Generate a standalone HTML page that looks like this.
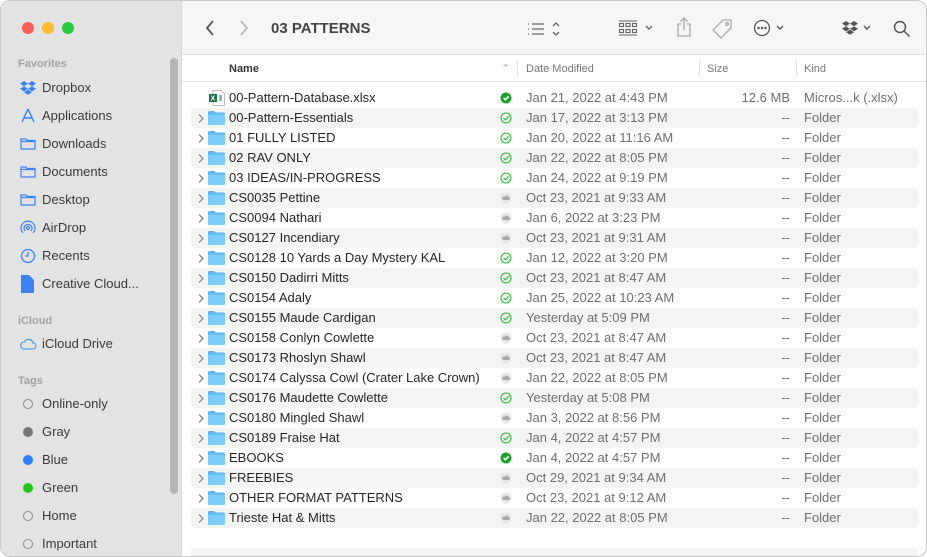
<!DOCTYPE html>
<html><head><meta charset="utf-8"><style>
*{margin:0;padding:0;box-sizing:border-box}
body{width:927px;height:557px;background:#fff;font-family:"Liberation Sans",Arial,sans-serif;overflow:hidden;position:relative}
.win{position:absolute;left:0;top:0;width:927px;height:557px;border:1px solid #c8c8c8;border-radius:10px;overflow:hidden;background:#fff}
.side{position:absolute;left:0;top:0;width:181px;height:557px;background:#e3e3e3;border-right:1px solid #d6d6d6}
.dot{position:absolute;top:21px;width:12px;height:12px;border-radius:50%}
.sh{position:absolute;left:17px;font-size:11px;font-weight:bold;color:#a3a3a3}
.si{position:absolute;left:41px;font-size:13px;color:#3a3a3a;line-height:16px}
.ic{position:absolute;left:19px}
.scroll{position:absolute;left:169px;top:57px;width:8px;height:436px;border-radius:4px;background:#b5b5b5}
.tb{position:absolute;left:181px;top:0;right:0;height:54px;background:#f6f6f6;border-bottom:1px solid #dedede}
.title{position:absolute;left:89px;top:19px;font-size:15px;font-weight:bold;color:#444}
.hdr{position:absolute;left:181px;top:55px;right:0;height:26px;border-bottom:1px solid #e2e2e2;font-size:11px;color:#777}
.hdr span{position:absolute;top:7px}
.hdr i{position:absolute;top:4px;width:1px;height:18px;background:#e2e2e2}
.row{position:absolute;left:190px;width:727px;height:20px;font-size:13px;line-height:20px;color:#262626;border-radius:4px}
.row.g{background:#f4f4f4}
.row .n{position:absolute;left:38px}
.row .d{position:absolute;left:335px;color:#6e6e6e}
.row .s{position:absolute;right:128px;color:#6e6e6e}
.row .k{position:absolute;left:613px;color:#6e6e6e}
.row svg.ch{position:absolute;left:7px;top:6px}
.row svg.f{position:absolute;left:17px;top:3px}
.row svg.st{position:absolute;left:309px;top:4px}
</style></head><body><div class="win">
<div class="side">
<div class="dot" style="left:21px;background:#fe5f57"></div>
<div class="dot" style="left:41px;background:#febc2e"></div>
<div class="dot" style="left:61px;background:#28c840"></div>
<div class="sh" style="top:57px">Favorites</div>
<svg class="ic" style="top:80px" width="16" height="14" viewBox="0 0 16 14"><path d="M4 0L0 2.6 4 5.2 8 2.6zM12 0L8 2.6 12 5.2 16 2.6zM0 7.8L4 10.4 8 7.8 4 5.2zM12 5.2L8 7.8 12 10.4 16 7.8zM4 11.2L8 13.8 12 11.2 8 8.6z" fill="#3b82f6"/></svg>
<div class="si" style="top:79px">Dropbox</div>
<svg class="ic" style="top:107px" width="16" height="16" viewBox="0 0 16 16" fill="none" stroke="#3b82f6" stroke-width="1.4"><path d="M8 1L2 14M8 1l6 13M4 10h8"/></svg>
<div class="si" style="top:107px">Applications</div>
<svg class="ic" style="top:136px" width="16" height="13" viewBox="0 0 16 13" fill="none" stroke="#3b82f6" stroke-width="1.2"><path d="M1 2h5l1 1.5h8V12H1zM1 4.5h14"/></svg>
<div class="si" style="top:135px">Downloads</div>
<svg class="ic" style="top:164px" width="16" height="13" viewBox="0 0 16 13" fill="none" stroke="#3b82f6" stroke-width="1.2"><path d="M1 2h5l1 1.5h8V12H1zM1 4.5h14"/></svg>
<div class="si" style="top:163px">Documents</div>
<svg class="ic" style="top:192px" width="16" height="13" viewBox="0 0 16 13" fill="none" stroke="#3b82f6" stroke-width="1.2"><path d="M1 2h5l1 1.5h8V12H1zM1 4.5h14"/></svg>
<div class="si" style="top:191px">Desktop</div>
<svg class="ic" style="top:219px" width="16" height="16" viewBox="0 0 16 16" fill="none" stroke="#3b82f6" stroke-width="1.2"><circle cx="8" cy="8" r="1.5"/><path d="M5 11a4 4 0 1 1 6 0M3 13a7 7 0 1 1 10 0"/></svg>
<div class="si" style="top:219px">AirDrop</div>
<svg class="ic" style="top:247px" width="16" height="16" viewBox="0 0 16 16" fill="none" stroke="#3b82f6" stroke-width="1.3"><circle cx="8" cy="8" r="6.5"/><path d="M8 4v4h-3"/></svg>
<div class="si" style="top:247px">Recents</div>
<svg class="ic" style="top:274px" width="14" height="18" viewBox="0 0 14 18"><path d="M1 0h8l5 5v13H1z" fill="#3b82f6"/></svg>
<div class="si" style="top:275px">Creative Cloud...</div>
<div class="sh" style="top:314px">iCloud</div>
<svg class="ic" style="top:337px" width="17" height="12" viewBox="0 0 17 12" fill="none" stroke="#3b9ae6" stroke-width="1.1"><path d="M4 11h9a3 3 0 0 0 0-6 4.5 4.5 0 0 0-8.5-1A3.5 3.5 0 0 0 4 11z"/></svg>
<div class="si" style="top:335px">iCloud Drive</div>
<div class="sh" style="top:374px">Tags</div>
<div style="position:absolute;left:22px;top:398px;width:10px;height:10px;border-radius:50%;border:1px solid #888"></div><div class="si" style="top:395px">Online-only</div>
<div style="position:absolute;left:22px;top:426px;width:10px;height:10px;border-radius:50%;background:#78777c"></div><div class="si" style="top:423px">Gray</div>
<div style="position:absolute;left:22px;top:454px;width:10px;height:10px;border-radius:50%;background:#2e7cf6"></div><div class="si" style="top:451px">Blue</div>
<div style="position:absolute;left:22px;top:482px;width:10px;height:10px;border-radius:50%;background:#27c21c"></div><div class="si" style="top:479px">Green</div>
<div style="position:absolute;left:22px;top:510px;width:10px;height:10px;border-radius:50%;border:1px solid #888"></div><div class="si" style="top:507px">Home</div>
<div style="position:absolute;left:22px;top:538px;width:10px;height:10px;border-radius:50%;border:1px solid #888"></div><div class="si" style="top:535px">Important</div>
<div class="scroll"></div>
</div>
<div class="tb">
<svg style="position:absolute;left:23px;top:19px" width="10" height="16" viewBox="0 0 10 16" fill="none" stroke="#555" stroke-width="1.8"><path d="M8 1L2 8l6 7"/></svg>
<svg style="position:absolute;left:57px;top:19px" width="10" height="16" viewBox="0 0 10 16" fill="none" stroke="#bbb" stroke-width="1.8"><path d="M2 1l6 7-6 7"/></svg>
<div class="title">03 PATTERNS</div>
<svg style="position:absolute;left:345px;top:19px" width="36" height="18" viewBox="0 0 36 18" fill="none" stroke="#666" stroke-width="1.3"><path d="M1 4h1M1 9h1M1 14h1M5 4h12M5 9h12M5 14h12M26 6l3-3 3 3M26 12l3 3 3-3"/></svg>
<svg style="position:absolute;left:436px;top:18px" width="38" height="18" viewBox="0 0 38 18" fill="none" stroke="#666" stroke-width="1.1"><path d="M1 2h18M1 16h18"/><rect x="1.5" y="4.5" width="4" height="3"/><rect x="8" y="4.5" width="4" height="3"/><rect x="14.5" y="4.5" width="4" height="3"/><rect x="1.5" y="10.5" width="4" height="3"/><rect x="8" y="10.5" width="4" height="3"/><rect x="14.5" y="10.5" width="4" height="3"/><path d="M28 7l3 3 3-3" stroke-width="1.4"/></svg>
<svg style="position:absolute;left:493px;top:15px" width="18" height="22" viewBox="0 0 18 22" fill="none" stroke="#aaa" stroke-width="1.3"><path d="M6 8H3v12h12V8h-3M9 14V2M5.5 5.5L9 2l3.5 3.5"/></svg>
<svg style="position:absolute;left:529px;top:17px" width="22" height="22" viewBox="0 0 22 22" fill="none" stroke="#aaa" stroke-width="1.3"><path d="M12 2h8v8L10 20 2 12z"/><circle cx="16" cy="6" r="1.3"/></svg>
<svg style="position:absolute;left:571px;top:18px" width="36" height="18" viewBox="0 0 36 18" fill="none" stroke="#555" stroke-width="1.3"><circle cx="9" cy="9" r="7.5"/><circle cx="5.5" cy="9" r=".6" fill="#555"/><circle cx="9" cy="9" r=".6" fill="#555"/><circle cx="12.5" cy="9" r=".6" fill="#555"/><path d="M24 7l3 3 3-3" stroke-width="1.4"/></svg>
<svg style="position:absolute;left:660px;top:19px" width="34" height="16" viewBox="0 0 34 16"><path d="M4 1L0 3.6 4 6.2 8 3.6zM12 1L8 3.6 12 6.2 16 3.6zM0 8.8L4 11.4 8 8.8 4 6.2zM12 6.2L8 8.8 12 11.4 16 8.8zM4 12.2L8 14.8 12 12.2 8 9.6z" fill="#555"/><path d="M22 6l3 3 3-3" fill="none" stroke="#555" stroke-width="1.4"/></svg>
<svg style="position:absolute;left:711px;top:19px" width="18" height="18" viewBox="0 0 18 18" fill="none" stroke="#555" stroke-width="1.5"><circle cx="7" cy="7" r="5.5"/><path d="M11 11l5.5 5.5"/></svg>
</div>
<div class="hdr">
<span style="left:47px;font-weight:bold;color:#333">Name</span>
<span style="left:319px;top:6px;color:#aaa">&#8963;</span>
<i style="left:335px"></i><span style="left:344px">Date Modified</span>
<i style="left:517px"></i><span style="left:525px">Size</span>
<i style="left:614px"></i><span style="left:622px">Kind</span>
</div>
<div id="rows"></div>
<div style="position:absolute;left:190px;top:547px;width:727px;height:12px;background:#f4f4f4;border-radius:4px"></div>
</div>
<script>
var CH='<svg class="ch" width="6" height="9" viewBox="0 0 6 9" fill="none" stroke="#777" stroke-width="1.1"><path d="M1 .5l4 4-4 4"/></svg>';
var F='<svg class="f" width="17" height="14" viewBox="0 0 17 14"><path d="M0 1.5Q0 0 1.5 0h4.5l1.5 1.5h8Q17 1.5 17 3v9.5Q17 14 15.5 14h-14Q0 14 0 12.5z" fill="#5cb8f0"/><path d="M0 3.5h17V12.5Q17 14 15.5 14h-14Q0 14 0 12.5z" fill="#7ccdf9"/></svg>';
var X='<svg class="f" width="17" height="16" viewBox="0 0 17 16" style="top:2px"><path d="M5 0.5h8l3.5 3.5v11.5H5z" fill="#fff" stroke="#bbb"/><rect x="1" y="4" width="8" height="8" fill="#1e7145"/><text x="2.5" y="10.5" font-size="7" fill="#fff" font-family="Liberation Sans" font-weight="bold">X</text><path d="M11 6h3M11 8h3M11 10h3" stroke="#1e7145"/></svg>';
var C={c:'<svg class="st" width="12" height="12" viewBox="0 0 12 12" fill="none" stroke="#2fb73a" stroke-width="1.1"><circle cx="6" cy="6" r="5"/><path d="M3.5 6l1.8 1.8L8.7 4.3"/></svg>',
f:'<svg class="st" width="12" height="12" viewBox="0 0 12 12"><circle cx="6" cy="6" r="5.5" fill="#1f9e2c"/><path d="M3.5 6l1.8 1.8L8.7 4.3" fill="none" stroke="#fff" stroke-width="1.5"/></svg>',
o:'<svg class="st" width="12" height="12" viewBox="0 0 12 12"><circle cx="6" cy="6" r="5.5" fill="#e6e6e6"/><path d="M3.5 8h5a1.5 1.5 0 0 0 0-3 2 2 0 0 0-3.8-.3A1.7 1.7 0 0 0 3.5 8z" fill="#a8a8a8"/></svg>'};
var R=[["00-Pattern-Database.xlsx","f","Jan 21, 2022 at 4:43 PM","12.6 MB","Micros...k (.xlsx)",1],
["00-Pattern-Essentials","c","Jan 17, 2022 at 3:13 PM"],["01 FULLY LISTED","c","Jan 20, 2022 at 11:16 AM"],["02 RAV ONLY","c","Jan 22, 2022 at 8:05 PM"],["03 IDEAS/IN-PROGRESS","c","Jan 24, 2022 at 9:19 PM"],["CS0035 Pettine","o","Oct 23, 2021 at 9:33 AM"],["CS0094 Nathari","o","Jan 6, 2022 at 3:23 PM"],["CS0127 Incendiary","o","Oct 23, 2021 at 9:31 AM"],["CS0128 10 Yards a Day Mystery KAL","c","Jan 12, 2022 at 3:20 PM"],["CS0150 Dadirri Mitts","c","Oct 23, 2021 at 8:47 AM"],["CS0154 Adaly","c","Jan 25, 2022 at 10:23 AM"],["CS0155 Maude Cardigan","c","Yesterday at 5:09 PM"],["CS0158 Conlyn Cowlette","o","Oct 23, 2021 at 8:47 AM"],["CS0173 Rhoslyn Shawl","o","Oct 23, 2021 at 8:47 AM"],["CS0174 Calyssa Cowl (Crater Lake Crown)","o","Jan 22, 2022 at 8:05 PM"],["CS0176 Maudette Cowlette","c","Yesterday at 5:08 PM"],["CS0180 Mingled Shawl","o","Jan 3, 2022 at 8:56 PM"],["CS0189 Fraise Hat","c","Jan 4, 2022 at 4:57 PM"],["EBOOKS","f","Jan 4, 2022 at 4:57 PM"],["FREEBIES","o","Oct 29, 2021 at 9:34 AM"],["OTHER FORMAT PATTERNS","o","Oct 23, 2021 at 9:12 AM"],["Trieste Hat & Mitts","o","Jan 22, 2022 at 8:05 PM"]];
var h='';R.forEach(function(r,i){h+='<div class="row'+(i%2?' g':'')+'" style="top:'+(87+i*20)+'px">'+(r[5]?X:CH+F)+'<span class="n">'+r[0].replace('&','&amp;')+'</span>'+C[r[1]]+'<span class="d">'+r[2]+'</span><span class="s">'+(r[3]||'--')+'</span><span class="k">'+(r[4]||'Folder')+'</span></div>';});
document.getElementById('rows').innerHTML=h;
</script>
</body></html>
